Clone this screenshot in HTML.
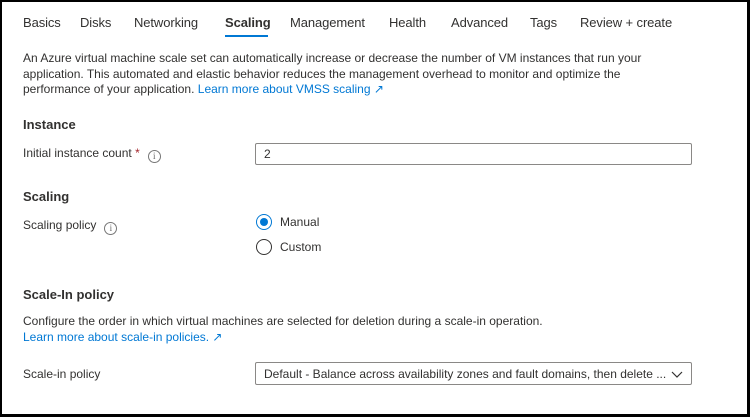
<!DOCTYPE html>
<html><head><style>
*{margin:0;padding:0;box-sizing:border-box}
body{width:750px;height:417px;background:#fff;font-family:"Liberation Sans",sans-serif;color:#323130;position:relative;overflow:hidden}
.frame{position:absolute;left:0;top:0;width:750px;height:417px;border:2px solid #000;border-right-width:3px;border-bottom-width:3px}
.a{position:absolute;white-space:nowrap;font-size:12px;letter-spacing:0}
.tab{position:absolute;top:15px;font-size:13px;color:#323130;letter-spacing:-0.1px}
.h{position:absolute;font-size:13px;font-weight:bold;color:#323130}
.link{color:#0078d4}
.info{display:inline-block;width:13px;height:13px;border:1px solid #777;border-radius:50%;font-size:9px;line-height:11px;text-align:center;color:#666;vertical-align:-2px;margin-left:8px;font-family:"Liberation Serif",serif}
.box{position:absolute;border:1px solid #8a8886;background:#fff;border-radius:2px}
.radio{position:absolute;width:16px;height:16px;border-radius:50%;border:1px solid #323130}
</style></head><body>
<div class="frame"></div>
<div class="tab" style="left:23px">Basics</div>
<div class="tab" style="left:80px">Disks</div>
<div class="tab" style="left:134px">Networking</div>
<div class="tab" style="left:225px;font-weight:bold">Scaling</div>
<div style="position:absolute;left:225px;top:35px;width:43px;height:2px;background:#0078d4"></div>
<div class="tab" style="left:290px">Management</div>
<div class="tab" style="left:389px">Health</div>
<div class="tab" style="left:451px">Advanced</div>
<div class="tab" style="left:530px">Tags</div>
<div class="tab" style="left:580px">Review + create</div>

<div class="a" style="left:23px;top:51px">An Azure virtual machine scale set can automatically increase or decrease the number of VM instances that run your</div>
<div class="a" style="left:23px;top:67px">application. This automated and elastic behavior reduces the management overhead to monitor and optimize the</div>
<div class="a" style="left:23px;top:82px">performance of your application. <span class="link">Learn more about VMSS scaling ↗</span></div>

<div class="h" style="left:23px;top:117px">Instance</div>
<div class="a" style="left:23px;top:146px">Initial instance count <span style="color:#a4262c">*</span><span class="info">i</span></div>
<div class="box" style="left:255px;top:143px;width:437px;height:22px"><span class="a" style="left:8px;top:3px">2</span></div>

<div class="h" style="left:23px;top:189px">Scaling</div>
<div class="a" style="left:23px;top:218px">Scaling policy<span class="info">i</span></div>
<div class="radio" style="left:256px;top:214px;border-color:#0078d4"><div style="position:absolute;left:3px;top:3px;width:8px;height:8px;border-radius:50%;background:#0078d4"></div></div>
<div class="a" style="left:280px;top:215px">Manual</div>
<div class="radio" style="left:256px;top:239px"></div>
<div class="a" style="left:280px;top:240px">Custom</div>

<div class="h" style="left:23px;top:287px">Scale-In policy</div>
<div class="a" style="left:23px;top:314px">Configure the order in which virtual machines are selected for deletion during a scale-in operation.</div>
<div class="a link" style="left:23px;top:330px">Learn more about scale-in policies. ↗</div>
<div class="a" style="left:23px;top:367px">Scale-in policy</div>
<div class="box" style="left:255px;top:362px;width:437px;height:23px"><span class="a" style="left:8px;top:4px">Default - Balance across availability zones and fault domains, then delete ...</span>
<svg style="position:absolute;right:8px;top:6px" width="12" height="10" viewBox="0 0 12 10"><path d="M1 3l5 5 5-5" fill="none" stroke="#323130" stroke-width="1.2"/></svg></div>
</body></html>
